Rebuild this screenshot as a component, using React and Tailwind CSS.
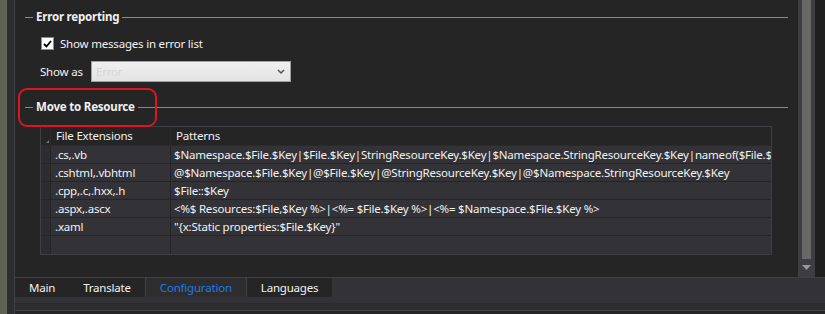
import React from 'react'

const rows = [
    ['.cs,.vb', '$Namespace.$File.$Key|$File.$Key|StringResourceKey.$Key|$Namespace.StringResourceKey.$Key|nameof($File.$Key)'],
    ['.cshtml,.vbhtml', '@$Namespace.$File.$Key|@$File.$Key|@StringResourceKey.$Key|@$Namespace.StringResourceKey.$Key'],
    ['.cpp,.c,.hxx,.h', '$File::$Key'],
    ['.aspx,.ascx', '<%$ Resources:$File,$Key %>|<%= $File.$Key %>|<%= $Namespace.$File.$Key %>'],
    ['.xaml', '"{x:Static properties:$File.$Key}"'],
    ['', ''],
]

const SectionHeader = ({ title, className = '' }) => (
    <div className={`flex items-center h-[16px] ${className}`}>
        <div className="w-[8px] h-px bg-[#8a8a8a]" />
        <span className="px-[3px] font-bold text-[#f1f1f1] leading-none">{title}</span>
        <div className="flex-1 h-px bg-[#8a8a8a]" />
    </div>
)

const Tab = ({ label, active }) => (
    <div
        className={
            active
                ? 'h-full flex items-center px-[14px] bg-[#2d2d30] border-x border-[#3f3f46] text-[#1f7ae0]'
                : 'h-full flex items-center px-[14px] bg-[#252526] text-[#f1f1f1]'
        }
    >
        {label}
    </div>
)

export default function App() {
    return (
        <div
            className="w-[825px] h-[314px] flex bg-[#252526] overflow-hidden text-[11.5px] tracking-[-0.2px] text-[#f1f1f1]"
            style={{ fontFamily: '"Noto Sans", "Open Sans", sans-serif' }}
        >
            {/* left window edge */}
            <div className="w-[7px] bg-[#5e6253]" />
            <div className="w-[7px] bg-[#2d2d30]" />

            <div className="flex-1 flex flex-col border-l border-[#3f3f46]">
                {/* scrolling content */}
                <div className="h-[277px] flex">
                    <div className="flex-1 relative pl-[10px] pr-[10px] pt-[9px]">
                        <SectionHeader title="Error reporting" />

                        <div className="flex items-center mt-[12px] pl-[16px] h-[13px]">
                            <div className="w-[13px] h-[13px] bg-white border border-[#8a8a8a] flex items-center justify-center">
                                <svg width="9" height="8" viewBox="0 0 9 8">
                                    <path d="M1 4 L3.5 6.5 L8 1" stroke="#000" strokeWidth="1.8" fill="none" />
                                </svg>
                            </div>
                            <span className="ml-[6px]">Show messages in error list</span>
                        </div>

                        <div className="flex items-center mt-[11px] pl-[15px]">
                            <span className="w-[51px]">Show as</span>
                            <div className="w-[200px] h-[21px] border border-[#a0a0a0] bg-gradient-to-b from-[#f0f0f0] to-[#e3e3e3] flex items-center justify-between pl-[4px] pr-[5px]">
                                <span className="text-[#d6d6d6]">Error</span>
                                <svg width="8" height="6" viewBox="0 0 8 6">
                                    <path d="M1 1 L4 4 L7 1" stroke="#555" strokeWidth="1.5" fill="none" />
                                </svg>
                            </div>
                        </div>

                        <SectionHeader title="Move to Resource" className="mt-[17px]" />
                        {/* highlight ring */}
                        <div className="absolute left-[3px] top-[88px] w-[139px] h-[39px] border-2 border-[#e0141e] rounded-[9px]" />

                        {/* patterns grid */}
                        <div className="ml-[15px] mt-[11px] w-[732px] border border-[#3f3f46] bg-[#333337]">
                            <div className="flex h-[19px] bg-[#252526] border-b border-[#2a2a2c]">
                                <div className="w-[10px] border-r border-[#2a2a2c] flex items-end justify-end pb-[2px] pr-[1px]">
                                    <svg width="3" height="3" viewBox="0 0 3 3">
                                        <path d="M3 0 V3 H0 Z" fill="#777" />
                                    </svg>
                                </div>
                                <div className="w-[120px] px-[5px] flex items-center border-r border-[#2a2a2c]">File Extensions</div>
                                <div className="flex-1 px-[5px] flex items-center">Patterns</div>
                            </div>
                            {rows.map(([ext, pattern], i) => (
                                <div key={i} className="flex h-[18px] border-b border-[#252527] last:border-b-0">
                                    <div className="w-[10px] bg-[#2d2d30] border-r border-[#252527]" />
                                    <div className="w-[120px] px-[4px] flex items-center border-r border-[#252527] whitespace-nowrap overflow-hidden">{ext}</div>
                                    <div className="flex-1 px-[3px] flex items-center whitespace-nowrap overflow-hidden">{pattern}</div>
                                </div>
                            ))}
                        </div>
                    </div>

                    {/* vertical scrollbar */}
                    <div className="w-[17px] bg-[#3e3e42] flex flex-col items-center pb-[4px]">
                        <div className="w-[9px] flex-1 bg-[#686868]" />
                        <svg width="9" height="6" viewBox="0 0 9 6" className="mt-[6px] mb-[2px]">
                            <path d="M0 0 H9 L4.5 5 Z" fill="#999" />
                        </svg>
                    </div>
                    <div className="w-[10px] bg-[#1f1f20]" />
                </div>

                {/* tab strip */}
                <div className="h-[26px] bg-[#333337] border-t border-[#3f3f46] flex flex-col">
                    <div className="h-[19px] flex">
                        <Tab label="Main" />
                        <Tab label="Translate" />
                        <Tab label="Configuration" active />
                        <Tab label="Languages" />
                    </div>
                </div>
                <div className="h-[1px] bg-[#2a2a2c]" />
                <div className="h-[7px] bg-[#2d2d30] border-b border-[#3f3f46]" />
                <div className="flex-1 bg-[#252526]" />
            </div>
        </div>
    )
}
